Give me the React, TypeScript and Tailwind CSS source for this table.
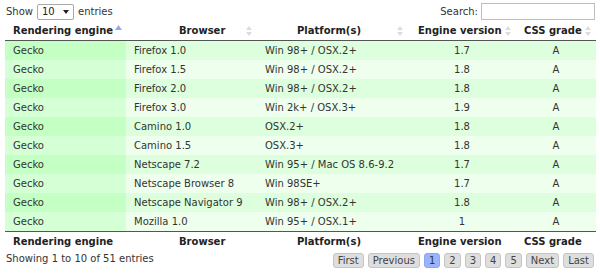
import React from "react";

const rows = [
  ["Gecko", "Firefox 1.0", "Win 98+ / OSX.2+", "1.7", "A"],
  ["Gecko", "Firefox 1.5", "Win 98+ / OSX.2+", "1.8", "A"],
  ["Gecko", "Firefox 2.0", "Win 98+ / OSX.2+", "1.8", "A"],
  ["Gecko", "Firefox 3.0", "Win 2k+ / OSX.3+", "1.9", "A"],
  ["Gecko", "Camino 1.0", "OSX.2+", "1.8", "A"],
  ["Gecko", "Camino 1.5", "OSX.3+", "1.8", "A"],
  ["Gecko", "Netscape 7.2", "Win 95+ / Mac OS 8.6-9.2", "1.7", "A"],
  ["Gecko", "Netscape Browser 8", "Win 98SE+", "1.7", "A"],
  ["Gecko", "Netscape Navigator 9", "Win 98+ / OSX.2+", "1.8", "A"],
  ["Gecko", "Mozilla 1.0", "Win 95+ / OSX.1+", "1", "A"],
];

function SortBoth() {
  return (
    <svg className="absolute right-[5px] top-[5px]" width="6" height="10" viewBox="0 0 6 10">
      <path d="M3 0 L6 4 L0 4 Z" fill="#dcdcdc" />
      <path d="M3 10 L6 6 L0 6 Z" fill="#dcdcdc" />
    </svg>
  );
}

function SortAsc() {
  return (
    <svg className="absolute right-[4px] top-[4px]" width="7" height="5" viewBox="0 0 7 5">
      <path d="M3.5 0 L7 5 L0 5 Z" fill="#9aa6e8" />
    </svg>
  );
}

function PageBtn({ label, current }: { label: string; current?: boolean }) {
  return (
    <span
      className={
        current
          ? "px-[4px] leading-[13px] border border-[#8fa6ec] rounded-[3px] bg-[#99b3ff] text-[#333]"
          : "px-[4px] leading-[13px] border border-[#c4c4c4] rounded-[3px] bg-[#dedede] text-[#444]"
      }
    >
      {label}
    </span>
  );
}

export default function App() {
  const head = ["Rendering engine", "Browser", "Platform(s)", "Engine version", "CSS grade"];
  const thPad = ["pl-[8px]", "pl-[53px]", "pl-[40px]", "pl-[10px]", "pl-[8px]"];
  return (
    <div className="w-[600px] h-[273px] bg-white px-[5px] font-['DejaVu_Sans',Verdana,sans-serif] text-[10px] text-[#333]">
      <div className="flex items-center justify-between h-[21px] pt-[2px]">
        <div className="flex items-center gap-[4px] pl-[1px]">
          <span>Show</span>
          <div className="flex items-center justify-between w-[37px] h-[16px] border border-[#a9a9a9] rounded-[2px] bg-white pl-[4px] pr-[4px] text-[#222]">
            <span>10</span>
            <svg width="6" height="4" viewBox="0 0 6 4">
              <path d="M0 0 L6 0 L3 4 Z" fill="#222" />
            </svg>
          </div>
          <span>entries</span>
        </div>
        <div className="flex items-center gap-[3px]">
          <span>Search:</span>
          <div className="w-[114px] h-[17px] border border-[#bdbdbd] bg-white" />
        </div>
      </div>
      <table className="table-fixed w-[591px] border-collapse">
        <colgroup>
          <col className="w-[121px]" />
          <col className="w-[131px]" />
          <col className="w-[151px]" />
          <col className="w-[108px]" />
          <col className="w-[80px]" />
        </colgroup>
        <thead>
          <tr className="border-b border-[#555]">
            {head.map((h, i) => (
              <th key={h} className={`relative ${thPad[i]} pr-0 py-[3px] leading-[13px] font-bold text-left whitespace-nowrap text-[#222]`}>
                {h}
                {i === 0 ? <SortAsc /> : <SortBoth />}
              </th>
            ))}
          </tr>
        </thead>
        <tbody>
          {rows.map((r, ri) => {
            const odd = ri % 2 === 0;
            return (
              <tr key={ri} className={odd ? "bg-[#ddffdd]" : "bg-[#eeffee]"}>
                {r.map((c, ci) => (
                  <td
                    key={ci}
                    className={`px-[8px] py-[3px] leading-[13px] whitespace-nowrap ${ci >= 3 ? "text-center" : "text-left"} ${
                      ci === 0 ? (odd ? "bg-[#c4ffc4]" : "bg-[#d5ffd5]") : ""
                    }`}
                  >
                    {c}
                  </td>
                ))}
              </tr>
            );
          })}
        </tbody>
        <tfoot>
          <tr className="border-t border-[#555]">
            {head.map((h, i) => (
              <th key={h} className={`${thPad[i]} pr-0 py-[3px] leading-[13px] font-bold text-left whitespace-nowrap text-[#222]`}>
                {h}
              </th>
            ))}
          </tr>
        </tfoot>
      </table>
      <div className="flex items-start justify-between">
        <div className="pt-[1px] pl-[1px] leading-[13px]">Showing 1 to 10 of 51 entries</div>
        <div className="flex gap-[4px] mt-[2px] pr-[1px]">
          <PageBtn label="First" />
          <PageBtn label="Previous" />
          <PageBtn label="1" current />
          <PageBtn label="2" />
          <PageBtn label="3" />
          <PageBtn label="4" />
          <PageBtn label="5" />
          <PageBtn label="Next" />
          <PageBtn label="Last" />
        </div>
      </div>
    </div>
  );
}
